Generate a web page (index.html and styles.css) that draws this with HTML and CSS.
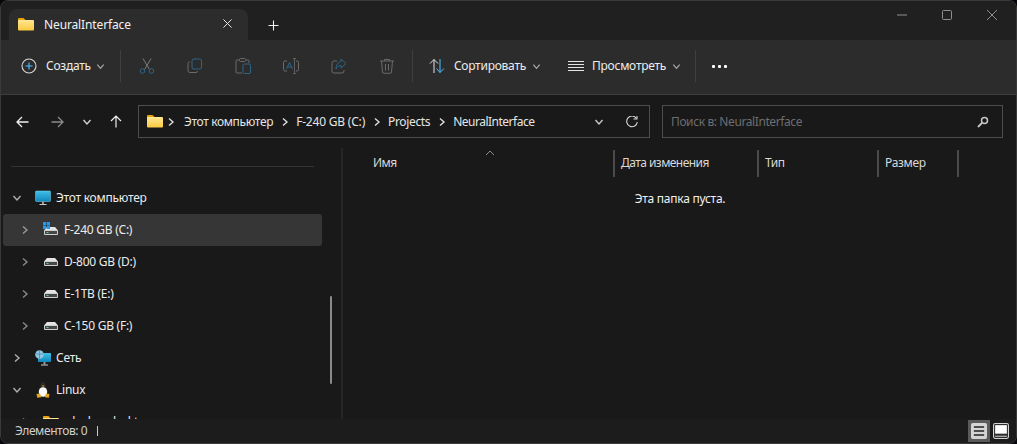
FILE: index.html
```html
<!DOCTYPE html>
<html lang="ru">
<head>
<meta charset="utf-8">
<title>NeuralInterface</title>
<link rel="stylesheet" href="styles.css">
</head>
<body>
<svg class="defs" width="0" height="0">
  <defs>
    <linearGradient id="fold" x1="0" y1="0" x2="0" y2="1"><stop offset="0" stop-color="#ffe794"/><stop offset="1" stop-color="#fcc93f"/></linearGradient>
    <linearGradient id="scr" x1="0" y1="0" x2="0" y2="1"><stop offset="0" stop-color="#3fc0e6"/><stop offset="1" stop-color="#1186bd"/></linearGradient>
    <symbol id="folder" viewBox="0 0 16 14"><path d="M0 2a1 1 0 0 1 1-1h4.500l1.500 1.500v2H0z" fill="#e9a308"/><path d="M0 4a1 1 0 0 1 1-1h14a1 1 0 0 1 1 1v8.500a1 1 0 0 1-1 1H1a1 1 0 0 1-1-1z" fill="url(#fold)"/></symbol>
    <symbol id="drive" viewBox="0 0 14 8"><path d="M3 0h8l3 3.500H0z" fill="#e4e4e4"/><rect y="3" width="14" height="5" rx="1" fill="#cfcfcf"/><rect x="1" y="4" width="12" height="3" fill="#474747"/><rect x="2.500" y="5" width="2" height="1" fill="#62d46e"/></symbol>
    <symbol id="chev-r" viewBox="0 0 10 10"><path d="M3 1.500 7 5 3 8.500" fill="none" stroke="currentColor" stroke-width="1.400"/></symbol>
    <symbol id="chev-d" viewBox="0 0 10 10"><path d="M1.500 3 5 7 8.500 3" fill="none" stroke="currentColor" stroke-width="1.400"/></symbol>
    <symbol id="screen" viewBox="0 0 16 16"><rect x=".5" y="1" width="15" height="10.500" rx=".8" fill="url(#scr)" stroke="#7fd4ee" stroke-width=".5"/><rect x="7" y="11.500" width="2" height="2.500" fill="#9a9a9a"/><rect x="4.500" y="14" width="7" height="1" fill="#c8c8c8"/></symbol>
  </defs>
</svg>
<div class="window">
  <header class="tabbar">
    <div class="tab">
      <svg class="tab-folder"><use href="#folder"/></svg>
      <span class="tab-title">NeuralInterface</span>
      <svg class="tab-close" viewBox="0 0 10 10"><path d="M.5.500l9 9M9.500.500l-9 9" stroke="#e8e8e8" stroke-width="1.100"/></svg>
    </div>
    <svg class="tab-new" viewBox="0 0 11 11"><path d="M5.500.500v10M.5 5.500h10" stroke="#f0f0f0" stroke-width="1.100"/></svg>
    <div class="caption">
      <svg class="cap-btn" viewBox="0 0 10 10"><path d="M0 5h10" stroke="#8f8f8f"/></svg>
      <svg class="cap-btn" viewBox="0 0 10 10"><rect x=".5" y=".5" width="9" height="9" rx="1" fill="none" stroke="#8f8f8f"/></svg>
      <svg class="cap-btn" viewBox="0 0 10 10"><path d="M0 0l10 10M10 0L0 10" stroke="#8f8f8f"/></svg>
    </div>
  </header>

  <div class="toolbar">
    <div class="tb-btn tb-create">
      <svg class="tb-icon" viewBox="0 0 16 16"><circle cx="8" cy="8" r="7" fill="none" stroke="#d8d8d8" stroke-width="1.100"/><path d="M8 4.500v7M4.500 8h7" stroke="#4cc2ff" stroke-width="1.100"/></svg>
      <span>Создать</span>
      <svg class="tb-chev"><use href="#chev-d"/></svg>
    </div>
    <div class="tb-sep"></div>
    <div class="tb-actions">
      <svg class="tb-icon dim" viewBox="0 0 16 16"><path d="M4 .5l6.500 11M12 .5L5.500 11.500" fill="none" stroke="#7b7b7b"/><circle cx="3.500" cy="13" r="2.300" fill="none" stroke="#2f6587"/><circle cx="12.500" cy="13" r="2.300" fill="none" stroke="#2f6587"/></svg>
      <svg class="tb-icon dim" viewBox="0 0 16 16"><rect x="5" y="1" width="9.500" height="10" rx="2" fill="none" stroke="#2f6587"/><path d="M3 4H2.500A1.500 1.500 0 0 0 1 5.500v7A2 2 0 0 0 3 14.500h6a1.500 1.500 0 0 0 1.500-1.500" fill="none" stroke="#6b6b6b"/></svg>
      <svg class="tb-icon dim" viewBox="0 0 16 16"><path d="M4 2H2a1 1 0 0 0-1 1v11a1 1 0 0 0 1 1h5M11 2h2a1 1 0 0 1 1 1v2" fill="none" stroke="#6b6b6b"/><rect x="4.500" y=".5" width="6" height="3" rx="1" fill="none" stroke="#6b6b6b"/><rect x="8" y="6" width="7.500" height="9.500" rx="1.500" fill="none" stroke="#2f6587"/></svg>
      <svg class="tb-icon dim" viewBox="0 0 16 16"><path d="M4 3H2a1.500 1.500 0 0 0-1.500 1.500v7A1.500 1.500 0 0 0 2 13h2M13 3h1a1.500 1.500 0 0 1 1.500 1.500v7A1.500 1.500 0 0 1 14 13h-1" fill="none" stroke="#6b6b6b"/><path d="M3.500 11l3-6.500 3 6.500M4.500 9h4" fill="none" stroke="#2f6587"/><path d="M11.500 .5v15M10 .5h3M10 15.500h3" fill="none" stroke="#6b6b6b" stroke-width=".8"/></svg>
      <svg class="tb-icon dim" viewBox="0 0 16 16"><path d="M6 3H3a2 2 0 0 0-2 2v8a2 2 0 0 0 2 2h8a2 2 0 0 0 2-2v-1" fill="none" stroke="#6b6b6b"/><path d="M10 1l5 4.500L10 10V7.500C7.500 7.500 6 9 5 11c0-4 2-7 5-7.500z" fill="none" stroke="#2f6587"/></svg>
      <svg class="tb-icon dim" viewBox="0 0 16 16"><path d="M1 3h14M5.500 3V1.500h5V3M2.500 3l1 11a1.500 1.500 0 0 0 1.500 1.300h6a1.500 1.500 0 0 0 1.500-1.300l1-11M6.500 6v6.500M9.500 6v6.500" fill="none" stroke="#6b6b6b"/></svg>
    </div>
    <div class="tb-sep sep-sort"></div>
    <div class="tb-btn tb-sort">
      <svg class="tb-icon" viewBox="0 0 16 16"><path d="M5 15V1.500M1 5.500l4-4 4 4" fill="none" stroke="#e4e4e4"/><path d="M11 1v13.500M7.500 10.500l3.500 4 4-4" fill="none" stroke="#4cc2ff"/></svg>
      <span>Сортировать</span>
      <svg class="tb-chev"><use href="#chev-d"/></svg>
    </div>
    <div class="tb-btn tb-view">
      <svg class="tb-icon" viewBox="0 0 16 16"><path d="M0 3.500h16M0 6.500h16M0 9.500h16M0 12.500h16" stroke="#e4e4e4"/></svg>
      <span>Просмотреть</span>
      <svg class="tb-chev"><use href="#chev-d"/></svg>
    </div>
    <div class="tb-sep sep-more"></div>
    <div class="tb-more"><i></i><i></i><i></i></div>
  </div>

  <div class="navbar">
    <svg class="nav-icon back" viewBox="0 0 13 12"><path d="M12.500 6H1M6 1L1 6l5 5" fill="none" stroke="#f0f0f0" stroke-width="1.300"/></svg>
    <svg class="nav-icon fwd" viewBox="0 0 13 12"><path d="M.5 6H12M7 1l5 5-5 5" fill="none" stroke="#8a8a8a" stroke-width="1.300"/></svg>
    <svg class="nav-chev"><use href="#chev-d"/></svg>
    <svg class="nav-icon up" viewBox="0 0 12 13"><path d="M6 12.500V1M1 6l5-5 5 5" fill="none" stroke="#f0f0f0" stroke-width="1.200"/></svg>
    <div class="address">
      <svg class="addr-folder"><use href="#folder"/></svg>
      <svg class="crumb-sep crumb-first"><use href="#chev-r"/></svg><span>Этот компьютер</span>
      <svg class="crumb-sep"><use href="#chev-r"/></svg><span class="crumb-drive">F-240 GB (C:)</span>
      <svg class="crumb-sep"><use href="#chev-r"/></svg><span>Projects</span>
      <svg class="crumb-sep"><use href="#chev-r"/></svg><span class="crumb-long">NeuralInterface</span>
      <svg class="addr-chev"><use href="#chev-d"/></svg>
      <svg class="addr-refresh" viewBox="0 0 12 12"><path d="M10.500 2.500A5.300 5.300 0 1 0 11.300 6" fill="none" stroke="#d8d8d8" stroke-width="1.100"/><path d="M7.500 3h3.500V0" fill="none" stroke="#d8d8d8" stroke-width="1.100"/></svg>
    </div>
    <div class="search">
      <span>Поиск в: NeuralInterface</span>
      <svg class="search-icon" viewBox="0 0 12 12"><circle cx="7.500" cy="4.500" r="3" fill="none" stroke="#c8c8c8" stroke-width="1.500"/><path d="M5.300 6.700L1 11" stroke="#c8c8c8" stroke-width="1.800"/></svg>
    </div>
  </div>

  <main class="body">
    <aside class="sidebar">
      <div class="side-div"></div>
      <div class="tree-row lvl1">
        <svg class="arrow"><use href="#chev-d"/></svg>
        <svg class="ti"><use href="#screen"/></svg>
        <span>Этот компьютер</span>
      </div>
      <div class="tree-row lvl2 selected">
        <svg class="arrow"><use href="#chev-r"/></svg>
        <span class="drive-wrap">
          <svg class="win-logo" viewBox="0 0 7 7"><path d="M0 0h3.200v3.200H0zM3.800 0H7v3.200H3.800zM0 3.800h3.200V7H0zM3.800 3.800H7V7H3.800z" fill="#1e9af0"/></svg>
          <svg class="drv drv-sys"><use href="#drive"/></svg>
        </span>
        <span>F-240 GB (C:)</span>
      </div>
      <div class="tree-row lvl2">
        <svg class="arrow"><use href="#chev-r"/></svg>
        <span class="drive-wrap"><svg class="drv"><use href="#drive"/></svg></span>
        <span>D-800 GB (D:)</span>
      </div>
      <div class="tree-row lvl2">
        <svg class="arrow"><use href="#chev-r"/></svg>
        <span class="drive-wrap"><svg class="drv"><use href="#drive"/></svg></span>
        <span>E-1TB (E:)</span>
      </div>
      <div class="tree-row lvl2">
        <svg class="arrow"><use href="#chev-r"/></svg>
        <span class="drive-wrap"><svg class="drv"><use href="#drive"/></svg></span>
        <span>C-150 GB (F:)</span>
      </div>
      <div class="tree-row lvl1">
        <svg class="arrow"><use href="#chev-r"/></svg>
        <svg class="ti" viewBox="0 0 16 16"><rect x="3" y="3" width="13" height="9" rx=".8" fill="url(#scr)"/><rect x="8.500" y="12" width="2" height="2.500" fill="#9a9a9a"/><rect x="6" y="14.500" width="7" height="1" fill="#c8c8c8"/><circle cx="4.500" cy="4.500" r="4.300" fill="#8fc4de"/><path d="M.8 3.500c2 1 5.500 1 7.400 0M4.500.3v8.400" fill="none" stroke="#2f7fae" stroke-width=".6"/></svg>
        <span>Сеть</span>
      </div>
      <div class="tree-row lvl1">
        <svg class="arrow"><use href="#chev-d"/></svg>
        <svg class="ti" viewBox="0 0 16 16"><path d="M8 0C5.800 0 5.500 2 5.500 4 4.500 6 3 8 3.500 11c.5 2 2 3.500 4.500 3.500s4-1.500 4.500-3.500c.5-3-1-5-2-7C10.500 2 10.200 0 8 0z" fill="#2a2a2a"/><ellipse cx="8" cy="10" rx="4.200" ry="4.800" fill="#fafafa"/><path d="M1.500 12l3.500-.5 1.200 3.800-4 .5zM14.500 12l-3.500-.5-1.200 3.800 4 .5z" fill="#e6a51c"/><path d="M6.500 3.500h3L8 5z" fill="#e6a51c"/></svg>
        <span>Linux</span>
      </div>
      <div class="tree-row lvl2 lvl2-folder">
        <svg class="arrow"><use href="#chev-r"/></svg>
        <svg class="ti-folder"><use href="#folder"/></svg>
        <span>docker-desktop</span>
      </div>
      <div class="scroll-thumb"></div>
    </aside>
    <div class="splitter"></div>
    <section class="content">
      <div class="columns">
        <div class="col col-name">Имя<svg class="sort-caret" viewBox="0 0 10 6"><path d="M1 5l4-4 4 4" fill="none" stroke="#8a8a8a"/></svg></div>
        <div class="col col-date">Дата изменения</div>
        <div class="col col-type">Тип</div>
        <div class="col col-size">Размер</div>
      </div>
      <p class="empty">Эта папка пуста.</p>
    </section>
  </main>

  <footer class="status">
    <span>Элементов: 0</span>
    <i class="status-sep"></i>
    <div class="view-switch">
      <div class="vs-btn active">
        <svg viewBox="0 0 14 14"><rect width="14" height="14" rx="1.500" fill="#d4d4d4"/><path d="M2.500 3.500h9M2.500 7h9M2.500 10.500h9" stroke="#222" stroke-width="1.200"/></svg>
      </div>
      <div class="vs-btn">
        <svg viewBox="0 0 15 15"><rect x=".5" y=".5" width="14" height="14" rx="1.500" fill="#2c2c2c" stroke="#d4d4d4"/><rect x="2" y="2" width="11" height="8" fill="#fff"/><path d="M2 12.500h11" stroke="#d4d4d4"/></svg>
      </div>
    </div>
  </footer>
</div>
</body>
</html>
```

FILE: styles.css
```css
* { box-sizing: border-box; }
html, body { margin: 0; height: 100%; background: #08080c; overflow: hidden; }
body { font: 12px/16px "Noto Sans", "Open Sans", sans-serif; letter-spacing: -.25px; color: #e8e8e8; }
.defs { position: absolute; }
svg { display: block; flex: none; color: #c8c8c8; }

.window {
  width: 1017px; height: 444px;
  display: flex; flex-direction: column;
  background: #191919;
  border: 1px solid #3a3a3a;
  border-radius: 8px;
  overflow: hidden;
}

/* tab strip */
.tabbar { height: 39px; flex: none; background: #202020; display: flex; align-items: flex-end; padding-left: 8px; position: relative; }
.tab { width: 239px; height: 31px; background: #2c2c2c; border-radius: 8px 8px 0 0; display: flex; align-items: center; padding: 0 16px 0 9px; }
.tab-folder { width: 16px; height: 14px; margin-top: -2px; }
.tab-title { margin-left: 10px; flex: 1; color: #f2f2f2; letter-spacing: -.13px; }
.tab-close { width: 9px; height: 9px; margin-top: -2px; }
.tab-new { width: 11px; height: 11px; margin: 0 0 9px 20px; }
.caption { margin-left: auto; align-self: flex-start; display: flex; gap: 35px; padding: 9px 19px 0 0; }
.cap-btn { width: 10px; height: 10px; }

/* toolbar */
.toolbar { height: 55px; flex: none; background: #2c2c2c; border-bottom: 1px solid #3e3e3e; display: flex; align-items: center; padding: 0 0 2px 20px; }
.tb-btn { display: flex; align-items: center; color: #ececec; }
.tb-icon { width: 16px; height: 16px; }
.tb-chev { width: 9px; height: 9px; color: #a8a8a8; margin-left: 5px; }
.tb-create span { margin-left: 9px; }
.tb-sep { width: 1px; height: 32px; background: #3f3f3f; margin-left: 15px; }
.tb-actions { display: flex; gap: 32px; margin-left: 18px; }
.sep-sort { margin-left: 17px; }
.tb-sort { margin-left: 16px; }
.tb-sort span { margin-left: 9px; }
.tb-sort .tb-chev, .tb-view .tb-chev { margin-left: 6px; }
.tb-view { margin-left: 27px; }
.tb-view span { margin-left: 8px; }
.sep-more { margin-left: 14px; }
.tb-more { display: flex; gap: 3px; margin-left: 16px; }
.tb-more i { width: 3px; height: 3px; background: #fff; border-radius: 1px; }

/* nav bar */
.navbar { height: 53px; flex: none; display: flex; align-items: center; }
.nav-icon { width: 13px; height: 12px; }
.back { margin-left: 15px; }
.fwd { margin-left: 22px; }
.nav-chev { width: 10px; height: 10px; color: #d0d0d0; margin-left: 18px; }
.up { width: 12px; height: 13px; margin-left: 18px; }
.address { width: 512px; height: 33px; margin-left: 16px; border: 1px solid #4d4d4d; display: flex; align-items: center; padding: 0 0 0 8px; color: #e6e6e6; letter-spacing: -.35px; }
.addr-folder { width: 16px; height: 14px; margin-top: -2px; }
.crumb-sep { width: 10px; height: 10px; margin: 0 6.5px; color: #dcdcdc; }
.crumb-first { margin: 0 8px 0 3px; }
.crumb-drive { letter-spacing: -.2px; }
.crumb-long { letter-spacing: -.5px; }
.addr-chev { width: 10px; height: 10px; margin-left: auto; }
.addr-refresh { width: 12px; height: 12px; margin: 0 11px 0 22px; }
.search { width: 341px; height: 33px; margin-left: 12px; border: 1px solid #4d4d4d; display: flex; align-items: center; justify-content: space-between; padding: 0 13px 0 8px; color: #6e6e6e; letter-spacing: -.4px; }
.search-icon { width: 12px; height: 12px; }

/* body */
.body { flex: 1; min-height: 0; display: flex; }
.sidebar { width: 340px; flex: none; position: relative; overflow: hidden; padding-top: 18px; }
.side-div { height: 1px; background: #333; margin: 0 27px 15px 10px; }
.tree-row { height: 32px; width: 319px; margin-left: 2px; display: flex; align-items: center; border-radius: 3px; color: #ececec; }
.arrow { width: 10px; height: 10px; color: #8a8a8a; }
.lvl1 { padding-left: 9px; }
.lvl1 .arrow { color: #b0b0b0; }
.ti { width: 16px; height: 16px; margin: 0 5px 0 13px; }
.lvl2 { padding-left: 17px; }
.drive-wrap { width: 16px; height: 16px; margin: 0 4px 0 14px; position: relative; display: flex; align-items: center; }
.drv { width: 14px; height: 8px; }
.drv-sys { margin-top: 2px; }
.win-logo { position: absolute; left: -1px; top: 0; width: 7px; height: 7px; }
.ti-folder { width: 16px; height: 14px; margin: 0 9px 0 13px; }
.selected { background: #363636; }
.selected .arrow { color: #9a9a9a; }
.scroll-thumb { position: absolute; left: 329px; top: 148px; width: 2px; height: 88px; background: #8a8a8a; border-radius: 1px; }
.splitter { width: 2px; flex: none; background: #262626; }

/* content */
.content { flex: 1; min-width: 0; }
.columns { height: 27px; margin-top: 2px; display: flex; color: #d8d8d8; letter-spacing: -.55px; }
.col { padding: 5px 0 0 6px; border-right: 2px solid #4a4a4a; position: relative; }
.col-name { width: 272px; padding-left: 30px; }
.col-date { width: 144px; }
.col-type { width: 120px; }
.col-size { width: 80px; letter-spacing: -.3px; }
.sort-caret { position: absolute; left: 142px; top: 0; width: 10px; height: 6px; }
.empty { margin: 14px 0 0; text-align: center; width: 674px; color: #f0f0f0; }

/* status */
.status { height: 24px; flex: none; background: #1c1c1c; display: flex; align-items: center; padding-left: 14px; color: #d0d0d0; letter-spacing: -.4px; }
.status-sep { width: 1px; height: 10px; background: #c8c8c8; margin-left: 10px; }
.view-switch { margin-left: auto; display: flex; align-items: center; gap: 2px; padding-right: 6px; }
.vs-btn { width: 22px; height: 22px; display: flex; align-items: center; justify-content: center; }
.vs-btn svg { width: 16px; height: 16px; }
.vs-btn.active { background: #5a5a5a; }
.vs-btn:last-child { width: 18px; }
```
